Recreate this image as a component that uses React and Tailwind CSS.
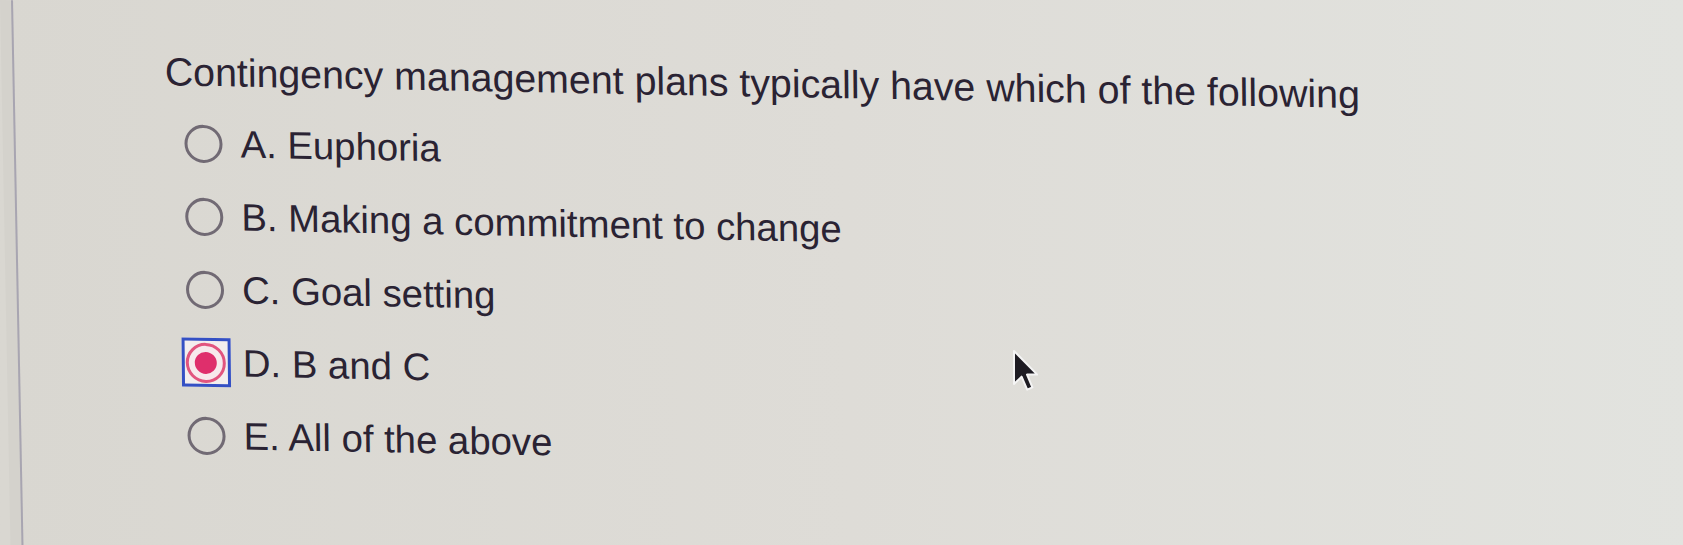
import React from 'react';

const options = [
  { key: 'A', text: 'A. Euphoria' },
  { key: 'B', text: 'B. Making a commitment to change' },
  { key: 'C', text: 'C. Goal setting' },
  { key: 'D', text: 'D. B and C', selected: true },
  { key: 'E', text: 'E. All of the above' },
];

const Radio = ({ selected }) => {
  if (selected) {
    return (
      <div className="w-[49px] h-[49px] border-[3px] border-[#3450c4] bg-[#f3eeee] flex items-center justify-center">
        <div className="w-[40px] h-[40px] rounded-full border-[3px] border-[#e2557f] bg-[#f7e9ec] flex items-center justify-center">
          <div className="w-[22px] h-[22px] rounded-full bg-[#df2f6c]" />
        </div>
      </div>
    );
  }
  return <div className="w-[38px] h-[38px] rounded-full border-[3px] border-[#716a74]" />;
};

const Cursor = () => (
  <svg
    className="absolute left-[1012px] top-[349px]"
    width="26"
    height="44"
    viewBox="0 0 13 22"
  >
    <path
      d="M1 1 L1 17.5 L4.8 13.8 L7.6 20.3 L10.2 19.2 L7.5 12.8 L12.6 12.8 Z"
      fill="#1d1b22"
      stroke="#f4f4f4"
      strokeWidth="1"
      strokeLinejoin="round"
    />
  </svg>
);

export default function App() {
  return (
    <div
      className="relative h-[545px] w-full overflow-hidden bg-gradient-to-r from-[#d9d7d1] via-[#dedcd7] to-[#e2e3df] text-[#2a2333]"
      style={{ fontFamily: '"Liberation Sans", Arial, sans-serif' }}
    >
      <div className="flex h-[545px] w-full origin-top-left skew-x-[0.6deg] skew-y-[1.1deg] bg-gradient-to-r from-[#d9d7d1] via-[#dedcd7] to-[#e2e3df]">
        <div className="w-[13px] shrink-0 origin-top skew-x-[0.5deg] border-r-2 border-[#a8a5b1] bg-[#d4d2cc]" />
        <div className="flex-1 pl-[151px] pt-[49px]">
          <h1 className="text-[39.3px] leading-none font-normal">
            Contingency management plans typically have which of the following
          </h1>
          <div className="mt-[15px] ml-[13px] flex flex-col">
            {options.map((o) => (
              <div key={o.key} className="flex h-[73px] items-center">
                <div className="w-[50px] flex justify-center">
                  <Radio selected={o.selected} />
                </div>
                <span className="ml-[12px] text-[38.3px] leading-none">{o.text}</span>
              </div>
            ))}
          </div>
        </div>
      </div>
      <Cursor />
    </div>
  );
}
